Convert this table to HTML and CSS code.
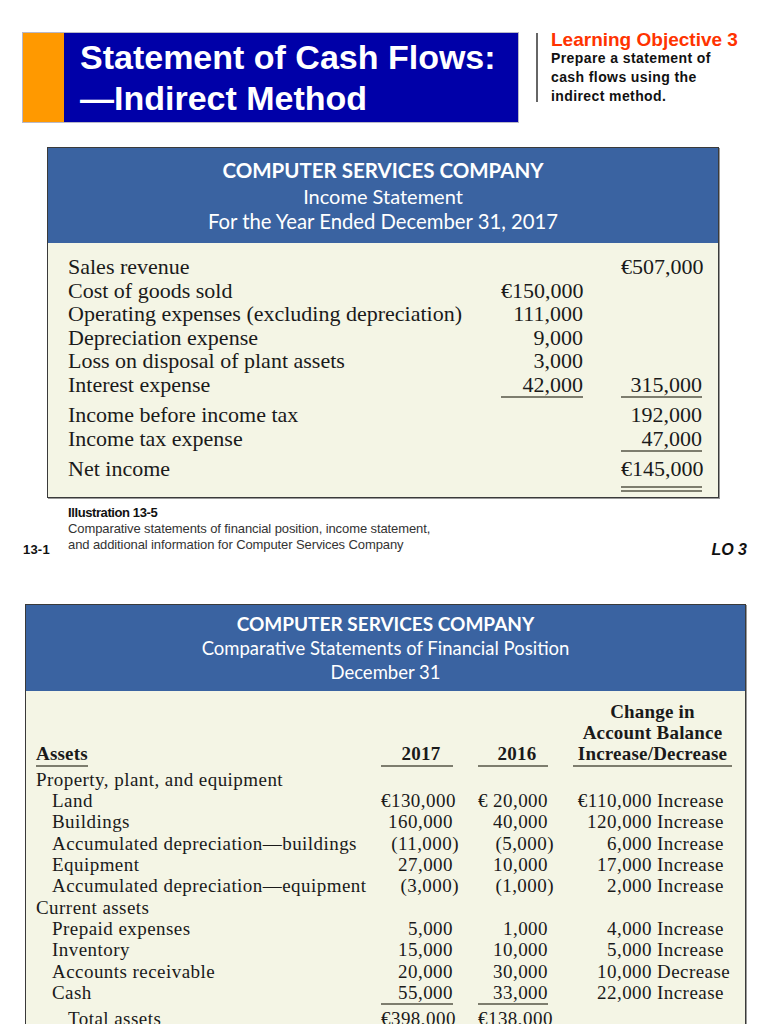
FILE: index.html
```html
<!DOCTYPE html>
<html lang="en">
<head>
<meta charset="utf-8">
<title>Statement of Cash Flows — Indirect Method</title>
<link rel="stylesheet" href="styles.css">
</head>
<body>
<header class="top">
  <div class="title-block">
    <div class="accent"></div>
    <h1 class="title">Statement of Cash Flows:<br>—Indirect Method</h1>
  </div>
  <div class="objective">
    <div class="obj-title">Learning Objective 3</div>
    <p class="obj-text">Prepare a statement of<br>cash flows using the<br>indirect method.</p>
  </div>
</header>

<section class="stmt income">
  <div class="stmt-head">
    <div class="co">COMPUTER SERVICES COMPANY</div>
    <div class="sub1">Income Statement</div>
    <div class="sub2">For the Year Ended December 31, 2017</div>
  </div>
  <div class="inc-body">
    <div class="irow"><span class="lbl">Sales revenue</span><span class="c1"></span><span class="c2">€507,000</span></div>
    <div class="irow"><span class="lbl">Cost of goods sold</span><span class="c1">€150,000</span><span class="c2"></span></div>
    <div class="irow"><span class="lbl">Operating expenses (excluding depreciation)</span><span class="c1">111,000</span><span class="c2"></span></div>
    <div class="irow"><span class="lbl">Depreciation expense</span><span class="c1">9,000</span><span class="c2"></span></div>
    <div class="irow"><span class="lbl">Loss on disposal of plant assets</span><span class="c1">3,000</span><span class="c2"></span></div>
    <div class="irow"><span class="lbl">Interest expense</span><span class="c1 ul">42,000</span><span class="c2 ul">315,000</span></div>
    <div class="irow gap"><span class="lbl">Income before income tax</span><span class="c1"></span><span class="c2">192,000</span></div>
    <div class="irow"><span class="lbl">Income tax expense</span><span class="c1"></span><span class="c2 ul">47,000</span></div>
    <div class="irow gap"><span class="lbl">Net income</span><span class="c1"></span><span class="c2 dul">€145,000</span></div>
  </div>
</section>

<div class="caption-row">
  <div class="page-no">13-1</div>
  <div class="caption">
    <div class="cap-title">Illustration 13-5</div>
    <div class="cap-text">Comparative statements of financial position, income statement,<br>and additional information for Computer Services Company</div>
  </div>
  <div class="lo">LO 3</div>
</div>

<section class="stmt position">
  <div class="stmt-head head2">
    <div class="co">COMPUTER SERVICES COMPANY</div>
    <div class="sub1">Comparative Statements of Financial Position</div>
    <div class="sub2">December 31</div>
  </div>
  <div class="pos-body">
    <div class="prow phead">
      <span class="plbl"><span class="hul">Assets</span></span>
      <span class="py">2017</span>
      <span class="py">2016</span>
      <span class="pch">Change in<br>Account Balance<br>Increase/Decrease</span>
    </div>
    <div class="prow first"><span class="plbl">Property, plant, and equipment</span><span class="pv"></span><span class="pv"></span><span class="pc"></span></div>
    <div class="prow"><span class="plbl ind">Land</span><span class="pv">€130,000</span><span class="pv euro"><span>€</span><span>20,000</span></span><span class="pc"><span class="pn">€110,000</span><span class="pw">Increase</span></span></div>
    <div class="prow"><span class="plbl ind">Buildings</span><span class="pv">160,000</span><span class="pv">40,000</span><span class="pc"><span class="pn">120,000</span><span class="pw">Increase</span></span></div>
    <div class="prow"><span class="plbl ind">Accumulated depreciation—buildings</span><span class="pv"><span class="neg">(11,000)</span></span><span class="pv"><span class="neg">(5,000)</span></span><span class="pc"><span class="pn">6,000</span><span class="pw">Increase</span></span></div>
    <div class="prow"><span class="plbl ind">Equipment</span><span class="pv">27,000</span><span class="pv">10,000</span><span class="pc"><span class="pn">17,000</span><span class="pw">Increase</span></span></div>
    <div class="prow"><span class="plbl ind">Accumulated depreciation—equipment</span><span class="pv"><span class="neg">(3,000)</span></span><span class="pv"><span class="neg">(1,000)</span></span><span class="pc"><span class="pn">2,000</span><span class="pw">Increase</span></span></div>
    <div class="prow"><span class="plbl">Current assets</span><span class="pv"></span><span class="pv"></span><span class="pc"></span></div>
    <div class="prow"><span class="plbl ind">Prepaid expenses</span><span class="pv">5,000</span><span class="pv">1,000</span><span class="pc"><span class="pn">4,000</span><span class="pw">Increase</span></span></div>
    <div class="prow"><span class="plbl ind">Inventory</span><span class="pv">15,000</span><span class="pv">10,000</span><span class="pc"><span class="pn">5,000</span><span class="pw">Increase</span></span></div>
    <div class="prow"><span class="plbl ind">Accounts receivable</span><span class="pv">20,000</span><span class="pv">30,000</span><span class="pc"><span class="pn">10,000</span><span class="pw">Decrease</span></span></div>
    <div class="prow"><span class="plbl ind">Cash</span><span class="pv ul">55,000</span><span class="pv ul">33,000</span><span class="pc"><span class="pn">22,000</span><span class="pw">Increase</span></span></div>
    <div class="prow total"><span class="plbl ind2">Total assets</span><span class="pv">€398,000</span><span class="pv">€138,000</span><span class="pc"></span></div>
  </div>
</section>
</body>
</html>
```

FILE: styles.css
```css
* { box-sizing: border-box; }
html, body { margin: 0; padding: 0; background: #ffffff; }
body { width: 768px; height: 1024px; overflow: hidden; font-family: "Liberation Sans", Arial, sans-serif; color: #111; }

/* ---------- Top header ---------- */
.top { display: flex; align-items: flex-start; padding: 33px 0 0 23px; }
.title-block { display: flex; width: 495px; height: 89px; outline: 1px solid #b8b8c8; }
.accent { width: 41px; background: #ff9900; }
.title { flex: 1; margin: 0; background: #0000a8; color: #ffffff; font-family: "Liberation Sans", Arial, sans-serif; font-weight: 700; font-size: 34px; line-height: 41px; padding: 4px 0 0 16px; letter-spacing: 0; }
.objective { margin-left: 18px; border-left: 2px solid #666; height: 69px; padding-left: 13px; }
.obj-title { color: #ff3300; font-weight: 700; font-size: 19px; line-height: 18px; margin-top: -2px; }
.obj-text { margin: 0; font-weight: 700; font-size: 14px; line-height: 19px; letter-spacing: 0.4px; color: #111; }

/* ---------- Statement boxes ---------- */
.stmt { border: 1px solid #3a3a3a; box-shadow: 1px 1px 0 #9a9a9a; }
.stmt-head { background: #3a63a1; color: #ffffff; text-align: center; font-family: Lato, "Open Sans", sans-serif; }
.income { margin: 25px 0 0 47px; width: 672px; }
.income .stmt-head { padding: 9px 0 10px; }
.income .co { font-weight: 700; font-size: 20.5px; line-height: 26px; }
.income .sub1 { font-size: 20px; line-height: 27px; }
.income .sub2 { font-size: 20.3px; line-height: 23px; }

.inc-body { background: #f4f5e5; padding: 12px 16px 5px 20px; font-family: "Liberation Serif", "Times New Roman", serif; font-size: 22px; letter-spacing: 0; color: #1a1a1a; }
.irow { display: grid; grid-template-columns: minmax(0, 1fr) 82px 81px; column-gap: 38px; line-height: 23.5px; }
.irow.gap { margin-top: 5px; }
.lbl { white-space: nowrap; }
.c1, .c2 { text-align: right; white-space: nowrap; }
.ul { border-bottom: 2px solid #7d7d6e; }
.dul { border-bottom: 6px double #7d7d6e; padding-bottom: 5px; }

/* ---------- Caption ---------- */
.caption-row { display: flex; align-items: flex-end; padding: 7px 21px 0 23px; }
.page-no { width: 45px; font-weight: 700; font-size: 13px; line-height: 18px; letter-spacing: 0.2px; }
.caption { flex: 1; padding-bottom: 6px; }
.cap-title { font-weight: 700; font-size: 13px; line-height: 16px; letter-spacing: -0.4px; color: #111; }
.cap-text { font-size: 13px; line-height: 16px; letter-spacing: -0.1px; color: #333; }
.lo { font-weight: 700; font-style: italic; font-size: 16px; line-height: 18px; }

/* ---------- Financial position ---------- */
.position { margin: 45px 0 0 25px; width: 721px; }
.head2 { padding: 7px 0 8px; }
.head2 .co { font-weight: 700; font-size: 19px; line-height: 24px; }
.head2 .sub1 { font-size: 18.5px; line-height: 25px; }
.head2 .sub2 { font-size: 18.5px; line-height: 22px; }

.pos-body { background: #f4f5e5; padding: 10px 13px 20px 10px; font-family: "Liberation Serif", "Times New Roman", serif; font-size: 19px; letter-spacing: 0.45px; color: #1a1a1a; }
.prow { display: grid; grid-template-columns: minmax(0, 1fr) 72px 70px 159px; column-gap: 25px; line-height: 21.35px; }
.prow.first { margin-top: 2px; }
.phead { font-weight: 700; align-items: end; letter-spacing: 0.2px; }
.phead .py { text-align: center; padding-left: 8px; border-bottom: 2px solid #7d7d6e; }
.phead .pch { text-align: center; border-bottom: 2px solid #7d7d6e; white-space: nowrap; }
.phead .plbl { align-self: end; }
.hul { display: inline-block; border-bottom: 2px solid #7d7d6e; }
.plbl { white-space: nowrap; }
.plbl.ind { padding-left: 16px; }
.plbl.ind2 { padding-left: 32px; }
.pv { text-align: right; white-space: nowrap; }
.pv.euro { display: flex; justify-content: space-between; }
.neg { display: inline-block; margin-right: -6px; }
.pc { display: flex; white-space: nowrap; }
.pn { width: 79px; text-align: right; }
.pw { margin-left: 5px; }
.total { margin-top: 3px; }
```
